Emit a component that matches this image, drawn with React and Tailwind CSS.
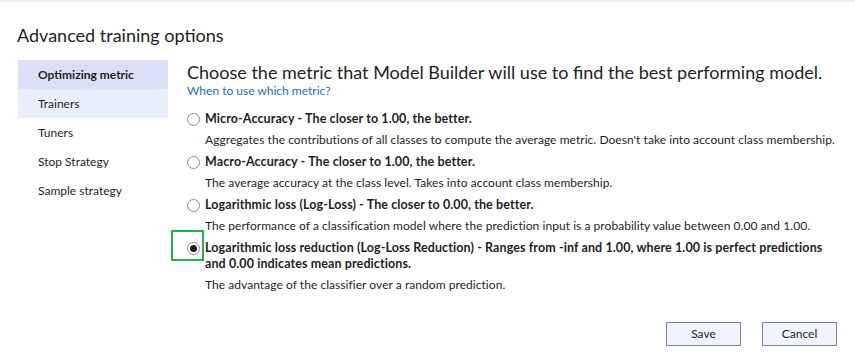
import { useState } from 'react';

const NAV = ['Optimizing metric', 'Trainers', 'Tuners', 'Stop Strategy', 'Sample strategy'];

const METRICS = [
  {
    id: 'micro',
    label: 'Micro-Accuracy - The closer to 1.00, the better.',
    desc: "Aggregates the contributions of all classes to compute the average metric. Doesn't take into account class membership.",
  },
  {
    id: 'macro',
    label: 'Macro-Accuracy - The closer to 1.00, the better.',
    desc: 'The average accuracy at the class level. Takes into account class membership.',
  },
  {
    id: 'logloss',
    label: 'Logarithmic loss (Log-Loss) - The closer to 0.00, the better.',
    desc: 'The performance of a classification model where the prediction input is a probability value between 0.00 and 1.00.',
  },
  {
    id: 'reduction',
    label: 'Logarithmic loss reduction (Log-Loss Reduction) - Ranges from -inf and 1.00, where 1.00 is perfect predictions and 0.00 indicates mean predictions.',
    desc: 'The advantage of the classifier over a random prediction.',
  },
];

function Radio({ checked }) {
  return (
    <span className="relative mt-[2px] flex h-[13px] w-[13px] shrink-0 items-center justify-center rounded-full border border-[#8a8a8a] bg-white">
      {checked && <span className="h-[7px] w-[7px] rounded-full bg-[#1b1b1b]" />}
      {checked && (
        <span className="pointer-events-none absolute left-[-17px] top-[-13px] h-[31px] w-[33px] border-2 border-[#22b14c]" />
      )}
    </span>
  );
}

export default function App() {
  const [active, setActive] = useState('reduction');

  return (
    <div
      className="flex h-[361px] w-[855px] flex-col border-t-2 border-[#f0f0f0] bg-white text-[#1e1e1e]"
      style={{ fontFamily: "'Segoe UI', Lato, sans-serif" }}
    >
      <h1 className="pl-[17px] pt-[20px] text-[18px] leading-[26px] font-normal">Advanced training options</h1>

      <div className="mt-[12px] flex flex-1">
        {/* Sidebar */}
        <nav className="ml-[18px] flex w-[150px] flex-col">
          {NAV.map((item, i) => (
            <div
              key={item}
              className={
                'flex h-[29px] items-center pl-[20px] text-[12px] ' +
                (i === 0 ? 'bg-[#dce0f6] font-bold' : i === 1 ? 'bg-[#e9eefc]' : '')
              }
            >
              {item}
            </div>
          ))}
        </nav>

        {/* Content */}
        <div className="ml-[19px] flex flex-1 flex-col pr-[18px]">
          <h2 className="whitespace-nowrap text-[18px] leading-[24px] font-normal">
            Choose the metric that Model Builder will use to find the best performing model.
          </h2>
          <a href="#" className="text-[12px] leading-[14px] text-[#1a6fc4]">When to use which metric?</a>

          <div className="mt-[13px] flex flex-col gap-[6px]">
            {METRICS.map((m) => (
              <label key={m.id} className="flex cursor-pointer gap-[5px]" onClick={() => setActive(m.id)}>
                <Radio checked={active === m.id} />
                <div className="flex flex-col">
                  <span className="text-[12.5px] leading-[16px] font-bold tracking-[0.1px]">{m.label}</span>
                  <span className="mt-[5px] text-[12px] leading-[16px] tracking-[0.05px]">{m.desc}</span>
                </div>
              </label>
            ))}
          </div>

          <div className="mt-auto mb-[15px] flex justify-end gap-[21px]">
            <button className="h-[24px] w-[75px] border border-[#7a869a] bg-[#f0f4fc] text-[12px]">Save</button>
            <button className="h-[24px] w-[75px] border border-[#7a869a] bg-[#f0f4fc] text-[12px]">Cancel</button>
          </div>
        </div>
      </div>
    </div>
  );
}
